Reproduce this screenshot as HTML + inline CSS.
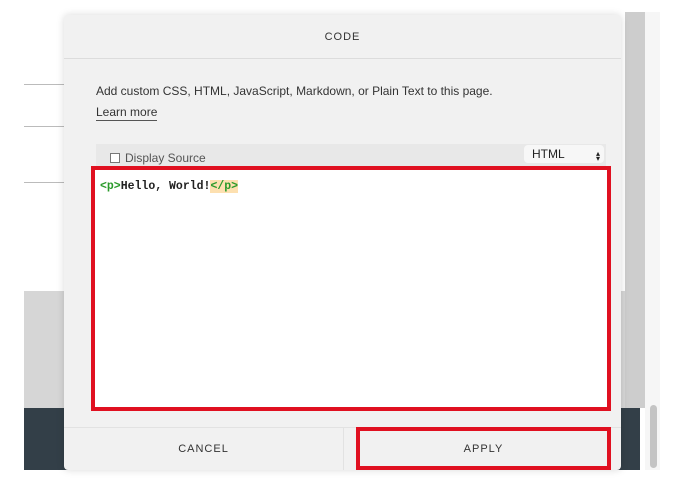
<!DOCTYPE html>
<html><head><style>
body{margin:0;width:685px;height:481px;background:#fff;position:relative;overflow:hidden;font-family:"Liberation Sans",sans-serif;}
.a{position:absolute;}
</style></head><body>
<div class="a" style="left:24px;top:12px;width:601px;height:279px;background:#fff"></div>
<div class="a" style="left:24px;top:84px;width:40px;height:1px;background:#bbb"></div>
<div class="a" style="left:24px;top:126px;width:40px;height:1px;background:#bbb"></div>
<div class="a" style="left:24px;top:182px;width:40px;height:1px;background:#bbb"></div>
<div class="a" style="left:24px;top:291px;width:616px;height:117px;background:#d6d6d6"></div>
<div class="a" style="left:24px;top:408px;width:616px;height:62px;background:#333f48"></div>
<div class="a" style="left:625px;top:12px;width:20px;height:396px;background:#cdcdcd"></div>
<div class="a" style="left:645px;top:12px;width:15px;height:458px;background:#f6f6f6"></div>
<div class="a" style="left:650px;top:405px;width:7px;height:63px;background:#c4c4c4;border-radius:4px"></div>
<div class="a" style="left:64px;top:15px;width:557px;height:455px;background:#f1f1f1;border-radius:4px;box-shadow:0 0 8px rgba(0,0,0,.15)">
  <div class="a" style="left:0;top:0;width:557px;height:43px;border-bottom:1px solid #dcdcdc;text-align:center;line-height:44px;font-size:11px;letter-spacing:1px;color:#333">CODE</div>
  <div class="a" style="left:32px;top:69px;font-size:12px;color:#333">Add custom CSS, HTML, JavaScript, Markdown, or Plain Text to this page.</div>
  <div class="a" style="left:32px;top:90px;font-size:12px;color:#333;border-bottom:1px solid #555;padding-bottom:1px">Learn more</div>
  <div class="a" style="left:32px;top:129px;width:510px;height:22px;background:#e8e8e8"></div>
  <div class="a" style="left:46px;top:138px;width:8px;height:8px;border:1px solid #777;background:#fff"></div>
  <div class="a" style="left:61px;top:136px;font-size:12px;color:#555">Display Source</div>
  <div class="a" style="left:460px;top:130px;width:80px;height:18px;background:#f7f7f7;border-radius:4px;font-size:12px;color:#222;line-height:18px;padding-left:8px;box-sizing:border-box">HTML<span style="position:absolute;right:4px;font-size:8px;top:0">▴<br></span><span style="position:absolute;right:4px;font-size:8px;top:5px">▾</span></div>
  <div class="a" style="left:27px;top:151px;width:520px;height:245px;background:#fff;border:4px solid #e01020;box-sizing:border-box"></div>
  <div class="a" style="left:36px;top:165px;font-family:'Liberation Mono',monospace;font-size:11.5px;color:#222;font-weight:bold"><span style="color:#2a9a2a">&lt;p&gt;</span>Hello, World!<span style="color:#2a9a2a;background:#fde0b0">&lt;/p&gt;</span></div>
  <div class="a" style="left:0;top:412px;width:557px;height:1px;background:#e2e2e2"></div>
  <div class="a" style="left:279px;top:412px;width:1px;height:43px;background:#e2e2e2"></div>
  <div class="a" style="left:0;top:413px;width:279px;height:43px;line-height:43px;text-align:center;font-size:11px;letter-spacing:1px;color:#333">CANCEL</div>
  <div class="a" style="left:292px;top:412px;width:255px;height:43px;border:4px solid #e01020;box-sizing:border-box;line-height:37px;text-align:center;font-size:11px;letter-spacing:1px;color:#333">APPLY</div>
</div>
</body></html>
